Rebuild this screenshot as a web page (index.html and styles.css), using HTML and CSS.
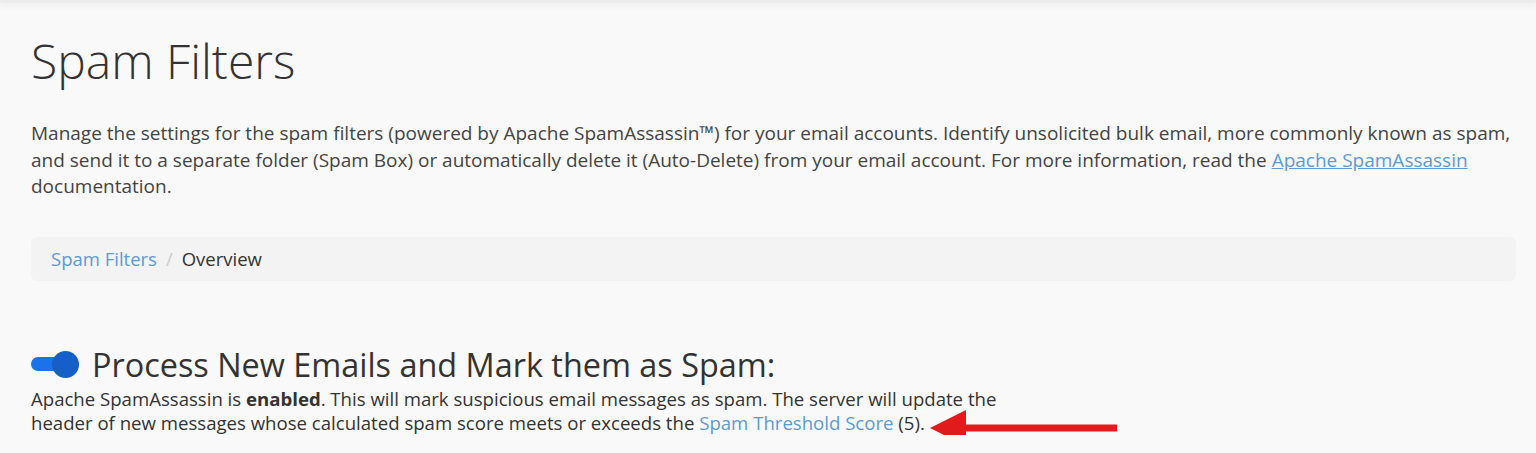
FILE: index.html
```html
<!DOCTYPE html>
<html lang="en">
<head>
<meta charset="utf-8">
<title>Spam Filters</title>
<link rel="stylesheet" href="styles.css">
</head>
<body>
<div class="topbar"></div>
<main class="page">
  <h1 class="title">Spam Filters</h1>
  <p class="intro">Manage the settings for the spam filters (powered by Apache SpamAssassin™) for your email accounts. Identify unsolicited bulk email, more commonly known as spam, and send it to a separate folder (Spam Box) or automatically delete it (Auto-Delete) from your email account. For more information, read the <a class="doclink" href="#">Apache SpamAssassin</a> documentation.</p>
  <nav class="crumbs">
    <a class="crumb-link" href="#">Spam Filters</a>
    <span class="crumb-sep">/</span>
    <span class="crumb-current">Overview</span>
  </nav>
  <section class="process">
    <h2 class="process-title">
      <span class="toggle"><span class="knob"></span></span>
      <span>Process New Emails and Mark them as Spam:</span>
    </h2>
    <p class="process-text">Apache SpamAssassin is <b>enabled</b>. This will mark suspicious email messages as spam. The server will update the header of new messages whose calculated spam score meets or exceeds the <a class="plainlink" href="#">Spam Threshold Score</a> (5).</p>
    <svg class="arrow" width="190" height="40" viewBox="0 0 190 40">
      <rect x="30" y="16.5" width="157" height="7" fill="#e11b1b"/>
      <polygon points="0,20 36,2 36,38" fill="#e11b1b"/>
    </svg>
  </section>
</main>
</body>
</html>
```

FILE: styles.css
```css
html, body {
  margin: 0;
  padding: 0;
  background: #f9f9f9;
  font-family: "Open Sans", "Noto Sans", sans-serif;
  color: #333;
}
.topbar {
  height: 3px;
  background: #ececec;
  box-shadow: 0 2px 6px rgba(0,0,0,0.08);
}
.page {
  padding: 0 20px 0 31px;
}
.title {
  margin: 25px 0 0;
  font-weight: 300;
  font-size: 48px;
  line-height: 66px;
  color: #333;
}
.intro {
  margin: 26px 0 0;
  font-size: 19px;
  line-height: 26.5px;
  color: #444;
}
.doclink {
  color: #5c9ad6;
  text-decoration: underline;
}
.crumbs {
  margin: 37px 0 0;
  height: 44px;
  background: #f3f3f3;
  border-radius: 6px;
  display: flex;
  align-items: center;
  padding: 0 20px;
  font-size: 18.5px;
}
.crumb-link {
  color: #5c9ad6;
  text-decoration: none;
}
.crumb-sep {
  color: #ccc;
  padding: 0 9px 0 9px;
}
.crumb-current {
  color: #333;
}
.process {
  margin-top: 61px;
  position: relative;
}
.process-title {
  margin: 0;
  display: flex;
  align-items: center;
  gap: 14px;
  font-weight: 400;
  font-size: 32.4px;
  line-height: 44px;
  color: #333;
}
.toggle {
  position: relative;
  width: 47px;
  height: 14px;
  background: #1a73e8;
  border-radius: 7px;
  display: inline-block;
  flex: none;
}
.knob {
  position: absolute;
  right: -1px;
  top: -6px;
  width: 27px;
  height: 27px;
  border-radius: 50%;
  background: #1560c8;
}
.process-text {
  margin: 1px 0 0;
  width: 990px;
  font-size: 18.6px;
  line-height: 24px;
  color: #333;
}
.plainlink {
  color: #5c9ad6;
  text-decoration: none;
}
.arrow {
  position: absolute;
  left: 899px;
  top: 66px;
}
```
